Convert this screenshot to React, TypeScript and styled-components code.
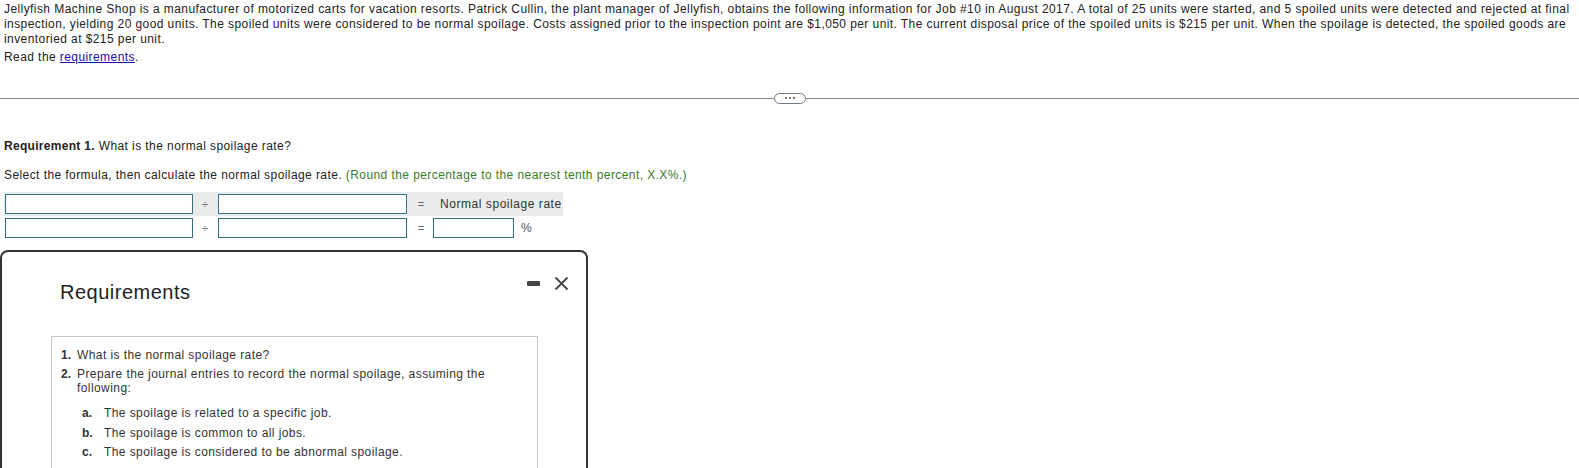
import styled, { createGlobalStyle } from "styled-components";

const GlobalStyle = createGlobalStyle`
  html, body {
    margin: 0;
    padding: 0;
    background: #fff;
  }
  body {
    font-family: "Liberation Sans", Arial, sans-serif;
    font-size: 12px;
    letter-spacing: 0.42px;
    color: #222;
    overflow: hidden;
  }
  b {
    letter-spacing: 0.3px;
  }
`;

const Page = styled.div`
  position: relative;
  width: 1579px;
  height: 468px;
  overflow: hidden;
`;

const Intro = styled.div`
  padding: 2px 4px 0 4px;
  line-height: 15px;
`;

const Para = styled.p`
  margin: 0;
`;

const ReadLine = styled.p`
  margin: 3px 0 0 0;
`;

const Link = styled.a`
  color: #1a0dab;
  text-decoration: underline;
  cursor: pointer;
`;

const Divider = styled.div`
  display: flex;
  align-items: center;
  margin-top: 27px;
  height: 12px;
`;

const Rule = styled.div`
  flex: 1;
  height: 1px;
  background: #8c8c8c;
`;

const MoreButton = styled.button`
  width: 32px;
  height: 11px;
  padding: 0;
  border: 1px solid #6f7b86;
  border-radius: 6px;
  background: #fff;
  display: flex;
  align-items: center;
  justify-content: center;
  gap: 2px;
`;

const Dot = styled.span`
  width: 2px;
  height: 2px;
  background: #444;
  border-radius: 50%;
`;

const Section = styled.div`
  padding: 0 4px;
  margin-top: 35px;
`;

const Question = styled.p`
  margin: 0;
  line-height: 14px;
`;

const Instruction = styled.p`
  margin: 15px 0 0 0;
  line-height: 14px;
`;

const Hint = styled.span`
  color: #3c7a2c;
`;

const Formula = styled.div`
  display: grid;
  grid-template-columns: 190px 22px 193px 24px 130px;
  grid-auto-rows: 24px;
  margin-top: 10px;
`;

const Cell = styled.div<{ $shade?: "blue" | "gray" }>`
  display: flex;
  align-items: center;
  background: ${({ $shade }) =>
    $shade === "blue" ? "#e4eef2" : $shade === "gray" ? "#ebebeb" : "transparent"};
`;

const OpCell = styled(Cell)`
  justify-content: center;
  color: #666;
  font-size: 11px;
  letter-spacing: 0;
`;

const Field = styled.div<{ $width: number; $offset?: number }>`
  width: ${({ $width }) => $width}px;
  margin-left: ${({ $offset }) => $offset ?? 0}px;
  height: 20px;
  box-sizing: border-box;
  border: 1px solid #3a6f7b;
  background: #fff;
`;

const ResultCell = styled(Cell)`
  gap: 7px;
`;

const Label = styled.span`
  padding-left: 7px;
  letter-spacing: 0.55px;
  color: #333;
`;

const Percent = styled.span`
  color: #555;
`;

const Modal = styled.div`
  position: absolute;
  left: 0;
  top: 250px;
  width: 588px;
  height: 240px;
  box-sizing: border-box;
  border: 2px solid #333;
  border-radius: 8px;
  background: #fff;
  padding: 28px 0 0 58px;
`;

const ModalHeader = styled.div`
  display: flex;
  justify-content: space-between;
  align-items: flex-start;
`;

const ModalTitle = styled.h2`
  margin: 0;
  font-size: 20px;
  font-weight: normal;
  letter-spacing: 0.5px;
  color: #222;
  line-height: 24px;
`;

const Controls = styled.div`
  display: flex;
  align-items: center;
  gap: 14px;
  margin-right: 17px;
  margin-top: -4px;
`;

const IconBtn = styled.span`
  display: inline-flex;
  color: #444;
`;

const ReqBox = styled.div`
  margin: 32px 0 0 -9px;
  width: 487px;
  border: 1px solid #c8c8c8;
  border-bottom: none;
  padding: 11px 0 0 9px;
  box-sizing: border-box;
  height: 140px;
`;

const List = styled.ol`
  margin: 0;
  padding: 0;
  list-style: none;
`;

const Item = styled.li`
  display: flex;
  line-height: 14px;
  margin-bottom: 5px;
`;

const Marker = styled.span<{ $w: number }>`
  font-weight: bold;
  letter-spacing: 0;
  color: #333;
  width: ${({ $w }) => $w}px;
  flex-shrink: 0;
`;

const ItemText = styled.span`
  color: #333;
`;

const SubList = styled.ol`
  margin: 11px 0 0 5px;
  padding: 0;
  list-style: none;
`;

const SubItem = styled.li`
  display: flex;
  line-height: 14px;
  margin-bottom: 5.5px;
`;

export default function App() {
  return (
    <Page>
      <GlobalStyle />
      <Intro>
        <Para>
          Jellyfish Machine Shop is a manufacturer of motorized carts for vacation resorts. Patrick Cullin, the
          plant manager of Jellyfish, obtains the following information for Job #10 in August 2017. A total of 25
          units were started, and 5 spoiled units were detected and rejected at final inspection, yielding 20 good
          units. The spoiled units were considered to be normal spoilage. Costs assigned prior to the inspection
          point are $1,050 per unit. The current disposal price of the spoiled units is $215 per unit. When the
          spoilage is detected, the spoiled goods are inventoried at $215 per unit.
        </Para>
        <ReadLine>
          Read the <Link>requirements</Link>.
        </ReadLine>
      </Intro>

      <Divider>
        <Rule />
        <MoreButton aria-label="more">
          <Dot />
          <Dot />
          <Dot />
        </MoreButton>
        <Rule />
      </Divider>

      <Section>
        <Question>
          <b>Requirement 1.</b> What is the normal spoilage rate?
        </Question>
        <Instruction>
          Select the formula, then calculate the normal spoilage rate.{" "}
          <Hint>(Round the percentage to the nearest tenth percent, X.X%.)</Hint>
        </Instruction>

        <Formula>
          <Cell $shade="blue">
            <Field $width={188} $offset={1} />
          </Cell>
          <OpCell $shade="gray">÷</OpCell>
          <Cell $shade="blue">
            <Field $width={189} $offset={2} />
          </Cell>
          <OpCell $shade="gray">=</OpCell>
          <Cell $shade="gray">
            <Label>Normal spoilage rate</Label>
          </Cell>

          <Cell>
            <Field $width={188} $offset={1} />
          </Cell>
          <OpCell>÷</OpCell>
          <Cell>
            <Field $width={189} $offset={2} />
          </Cell>
          <OpCell>=</OpCell>
          <ResultCell>
            <Field $width={81} />
            <Percent>%</Percent>
          </ResultCell>
        </Formula>
      </Section>

      <Modal>
        <ModalHeader>
          <ModalTitle>Requirements</ModalTitle>
          <Controls>
            <IconBtn>
              <svg width="13" height="6" viewBox="0 0 13 6">
                <rect x="0" y="0" width="13" height="5" rx="1" fill="#444" />
              </svg>
            </IconBtn>
            <IconBtn>
              <svg width="15" height="15" viewBox="0 0 15 15">
                <path d="M1.5 1.5 L13.5 13.5 M13.5 1.5 L1.5 13.5" stroke="#444" strokeWidth="1.8" fill="none" />
              </svg>
            </IconBtn>
          </Controls>
        </ModalHeader>
        <ReqBox>
          <List>
            <Item>
              <Marker $w={16}>1.</Marker>
              <ItemText>What is the normal spoilage rate?</ItemText>
            </Item>
            <Item>
              <Marker $w={16}>2.</Marker>
              <ItemText>
                Prepare the journal entries to record the normal spoilage, assuming the
                <br />
                following:
                <SubList>
                  <SubItem>
                    <Marker $w={22}>a.</Marker>
                    <ItemText>The spoilage is related to a specific job.</ItemText>
                  </SubItem>
                  <SubItem>
                    <Marker $w={22}>b.</Marker>
                    <ItemText>The spoilage is common to all jobs.</ItemText>
                  </SubItem>
                  <SubItem>
                    <Marker $w={22}>c.</Marker>
                    <ItemText>The spoilage is considered to be abnormal spoilage.</ItemText>
                  </SubItem>
                </SubList>
              </ItemText>
            </Item>
          </List>
        </ReqBox>
      </Modal>
    </Page>
  );
}
